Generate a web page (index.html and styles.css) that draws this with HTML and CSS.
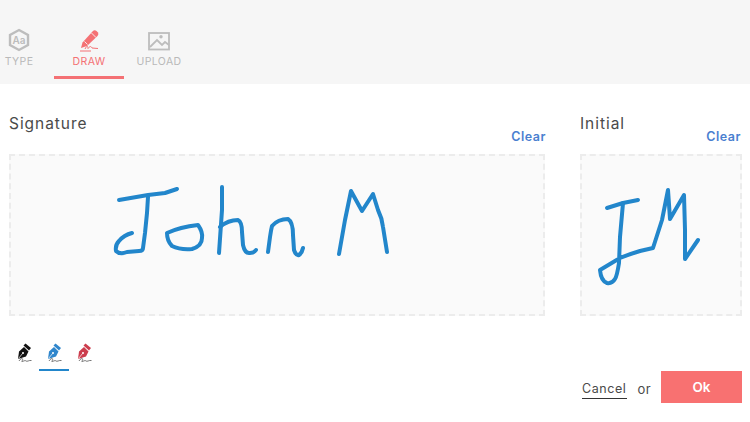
FILE: index.html
```html
<!DOCTYPE html>
<html lang="en">
<head>
<meta charset="utf-8">
<title>Signature</title>
<link rel="stylesheet" href="styles.css">
</head>
<body>
<svg class="defs" width="0" height="0" aria-hidden="true">
  <defs>
    <g id="pen">
      <path d="M1 16 L2 8.5 L7 4 L11.5 8.5 L9 13.5 Z" fill="currentColor"/>
      <path d="M6.5 2.5 L8.5 0.5 L14 5 L12 7.5 Z" fill="currentColor"/>
      <path d="M1.5 15.5 L5.5 10.5" stroke="#fff" stroke-width="0.7" fill="none"/>
      <circle cx="6" cy="10" r="1" fill="#fff"/>
      <path d="M2 18 C4 14.5 7 15 5 18 C4 20 8 16.5 9 18 C10 19 12 17 14.5 17.5" stroke="#555" stroke-width="0.8" fill="none"/>
    </g>
  </defs>
</svg>
<header class="tabs">
  <div class="tab tab-type">
    <svg class="tab-icon" width="22" height="24" viewBox="0 0 22 24">
      <path class="hex" d="M11 2 L20 7 L20 17 L11 22 L2 17 L2 7 Z"/>
      <text class="hex-text" x="11" y="16">Aa</text>
    </svg>
    <span class="tab-label">TYPE</span>
  </div>
  <div class="tab tab-active">
    <svg class="tab-icon" width="22" height="24" viewBox="0 0 22 24">
      <path d="M3 20 L4.5 14.5 L14.5 3.5 Q16.5 1.5 18.5 3 L20 4.5 Q21 6 19.5 8 L9 18 Z" fill="#f47174"/>
      <path d="M13.5 5 L18 9.5 M6.5 13.5 L9.5 16.5" stroke="#f6f6f6" stroke-width="0.9"/>
      <path d="M2 23 L13 23" stroke="#f47174" stroke-width="1"/>
      <path d="M7 21 C9 17 10 18 10 20.5 C12 18 13 18 14 20 L20 20.5" stroke="#f47174" stroke-width="1" fill="none"/>
    </svg>
    <span class="tab-label">DRAW</span>
  </div>
  <div class="tab">
    <svg class="tab-icon" width="24" height="24" viewBox="0 0 24 24">
      <rect class="photo" x="2" y="5" width="20" height="16.5"/>
      <path class="photo" d="M3 19 L10 12 L15 17 L18 14 L22 17"/>
      <circle cx="14" cy="8.8" r="1.7" fill="#bdbdbd"/>
    </svg>
    <span class="tab-label">UPLOAD</span>
  </div>
</header>
<main class="pads">
  <section class="pad-col pad-col-wide">
    <div class="pad-head">
      <h2 class="pad-title">Signature</h2>
      <a class="clear">Clear</a>
    </div>
    <svg class="pad" width="536" height="162" viewBox="11 156 532 158">
      <g class="ink">
        <path d="M119 200 L148 195 L165 193 L177 189"/>
        <path d="M148 197 L147 213 L145 233 L143 248 Q143 251 139 251 L127 252 Q120 255 116 251 Q115 245 119 241 Q124 235 132 233"/>
        <path d="M167 233 Q180 227 198 225 Q203 232 202 238 Q202 246 192 249 Q180 250 172 246 Q167 241 167 233 Z"/>
        <path d="M222 187 L222 210 L219 253"/>
        <path d="M220 227 Q228 220 238 220 Q242 222 242 232 L243 245 Q245 254 250 253 Q254 253 256 250"/>
        <path d="M268 252 L270 237 Q271 230 272 226 Q278 219 288 219 Q293 222 293 235 L294 250 Q296 256 299 255 Q302 253 303 248"/>
        <path d="M339 254 L345 220 L351 191 L362 211 L373 194 L378 210 Q382 218 383 227 L387 252"/>
      </g>
    </svg>
  </section>
  <section class="pad-col">
    <div class="pad-head">
      <h2 class="pad-title">Initial</h2>
      <a class="clear clear-narrow">Clear</a>
    </div>
    <svg class="pad" width="162" height="162" viewBox="582 156 158 158">
      <g class="ink">
        <path d="M607 208 L623 203 L638 200"/>
        <path d="M623 203 L620 237 L619 263 Q617 276 615 279 Q612 284 607 283 Q601 281 600 270 L620 258 Q630 254 640 251 L653 248 L662 220 L668 190 L670 219 L684 195 L685 230 L685 259 L698 240"/>
      </g>
    </svg>
  </section>
</main>
<footer class="bottom">
  <div class="pens">
    <div class="pen pen-black"><svg width="15" height="20" viewBox="0 0 15 20"><use href="#pen"/></svg></div>
    <div class="pen pen-blue pen-active"><svg width="15" height="20" viewBox="0 0 15 20"><use href="#pen"/></svg></div>
    <div class="pen pen-red"><svg width="15" height="20" viewBox="0 0 15 20"><use href="#pen"/></svg></div>
  </div>
  <div class="actions">
    <a class="cancel">Cancel</a>
    <span class="or">or</span>
    <button class="ok" type="button">Ok</button>
  </div>
</footer>
</body>
</html>
```
FILE: styles.css
```css
* { box-sizing: border-box; }
html, body { margin: 0; padding: 0; }
body {
  width: 750px;
  height: 422px;
  overflow: hidden;
  background: #fff;
  color: #4a4a4a;
  font-family: Inter, Lato, sans-serif;
}
.defs { position: absolute; }
.tabs {
  display: flex;
  height: 84px;
  padding-top: 28px;
  background: #f6f6f6;
}
.tab {
  display: flex;
  flex-direction: column;
  align-items: center;
  width: 70px;
  height: 51px;
  color: #b9b9b9;
}
.tab-type { width: 38px; margin-right: 16px; }
.tab-active { color: #f47174; border-bottom: 3px solid #f47174; }
.tab-icon { display: block; }
.tab-label {
  margin-top: 3px;
  font-size: 10.5px;
  line-height: 14px;
  letter-spacing: 0.4px;
}
.hex { fill: none; stroke: #bdbdbd; stroke-width: 2.4; }
.hex-text {
  font-size: 10px;
  font-weight: 600;
  fill: #bdbdbd;
  text-anchor: middle;
}
.photo { fill: none; stroke: #bdbdbd; stroke-width: 1.8; }
.pads {
  display: flex;
  gap: 35px;
  padding: 0 8px 0 9px;
}
.pad-col { width: 162px; }
.pad-col-wide { width: 536px; }
.pad-head {
  display: flex;
  justify-content: space-between;
  height: 70px;
}
.pad-title {
  margin: 29px 0 0;
  font-size: 15.5px;
  line-height: 22px;
  font-weight: 400;
  letter-spacing: 0.95px;
  color: #4a4a4a;
}
.clear {
  margin-top: 44px;
  margin-right: -1px;
  font-size: 12.5px;
  line-height: 18px;
  font-weight: 600;
  letter-spacing: 0.5px;
  color: #4a7fd0;
}
.clear-narrow { margin-right: 1px; }
.pad {
  display: block;
  background: #fafafa;
  border: 2px dashed #ececec;
}
.ink {
  fill: none;
  stroke: #2286cb;
  stroke-width: 4;
  stroke-linecap: round;
  stroke-linejoin: round;
}
.bottom {
  display: flex;
  justify-content: space-between;
  padding: 22px 8px 0 9px;
}
.pens { display: flex; height: 33px; }
.pen {
  display: flex;
  justify-content: center;
  width: 30px;
  height: 33px;
  padding-top: 5px;
}
.pen-active { border-bottom: 2px solid #2286cb; }
.pen-black { color: #111; }
.pen-blue { color: #2f86cc; }
.pen-red { color: #cc3d4d; }
.actions {
  display: flex;
  align-items: center;
  margin-top: 33px;
  height: 32px;
}
.cancel {
  padding-bottom: 1px;
  border-bottom: 1px solid #333;
  font-size: 12.5px;
  line-height: 17px;
  letter-spacing: 0.6px;
  margin-top: 4px;
}
.or {
  margin-left: 11px;
  margin-top: 4px;
  font-size: 13px;
  letter-spacing: 0.4px;
}
.ok {
  width: 81px;
  height: 32px;
  margin-left: 10px;
  border: 0;
  background: #f87171;
  color: #fff;
  font-family: inherit;
  font-size: 13.5px;
  font-weight: 600;
}
```
